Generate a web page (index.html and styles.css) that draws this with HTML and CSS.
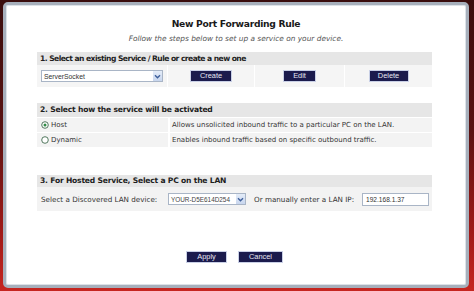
FILE: index.html
```html
<!DOCTYPE html>
<html>
<head>
<meta charset="utf-8">
<link rel="stylesheet" href="styles.css">
</head>
<body>
<div class="frame">
  <div class="panel">
    <h1 class="title">New Port Forwarding Rule</h1>
    <p class="subtitle">Follow the steps below to set up a service on your device.</p>

    <section class="sec sec1">
      <div class="sec-head">1. Select an existing Service / Rule or create a new one</div>
      <div class="row row-actions">
        <div class="cell"><div class="select select-service"><span class="sel-text">ServerSocket</span><span class="arrow"><svg width="9" height="9" viewBox="0 0 9 9"><path d="M2 3.2 L4.5 5.7 L7 3.2" fill="none" stroke="#3e5f9a" stroke-width="1.4"/></svg></span></div></div>
        <div class="cell center"><span class="btn btn-create">Create</span></div>
        <div class="cell center"><span class="btn btn-edit">Edit</span></div>
        <div class="cell center"><span class="btn btn-delete">Delete</span></div>
      </div>
    </section>

    <section class="sec sec2">
      <div class="sec-head">2. Select how the service will be activated</div>
      <div class="row row-opt">
        <div class="cell opt"><svg class="radio" width="8" height="8" viewBox="0 0 8 8"><circle cx="4" cy="4" r="3.3" fill="#fff" stroke="#3f6a4e" stroke-width="0.9"/><circle cx="4" cy="4" r="1.5" fill="#2f8a45"/></svg><span>Host</span></div>
        <div class="cell desc">Allows unsolicited inbound traffic to a particular PC on the LAN.</div>
      </div>
      <div class="row row-opt">
        <div class="cell opt"><svg class="radio" width="8" height="8" viewBox="0 0 8 8"><circle cx="4" cy="4" r="3.3" fill="#fff" stroke="#3f6a4e" stroke-width="0.9"/></svg><span>Dynamic</span></div>
        <div class="cell desc">Enables inbound traffic based on specific outbound traffic.</div>
      </div>
    </section>

    <section class="sec sec3">
      <div class="sec-head">3. For Hosted Service, Select a PC on the LAN</div>
      <div class="row row-lan">
        <span class="lbl lbl-dev">Select a Discovered LAN device:</span>
        <div class="select select-dev"><span class="sel-text">YOUR-D5E614D254</span><span class="arrow"><svg width="9" height="9" viewBox="0 0 9 9"><path d="M2 3.2 L4.5 5.7 L7 3.2" fill="none" stroke="#3e5f9a" stroke-width="1.4"/></svg></span></div>
        <span class="lbl lbl-ip">Or manually enter a LAN IP:</span>
        <div class="input">192.168.1.37</div>
      </div>
    </section>

    <div class="actions">
      <span class="btn btn-apply">Apply</span>
      <span class="btn btn-cancel">Cancel</span>
    </div>
  </div>
</div>
</body>
</html>
```

FILE: styles.css
```css
* { box-sizing: border-box; }
html, body { margin: 0; padding: 0; }
body {
  width: 474px;
  height: 291px;
  overflow: hidden;
  background: linear-gradient(to bottom, #3a0d0d 0%, #5a1212 45%, #a01a18 80%, #c62620 100%);
  font-family: "DejaVu Sans", Verdana, sans-serif;
  color: #222;
}
.frame {
  padding: 2px 5px 3px 3px;
  height: 291px;
}
.panel {
  height: 286px;
  background: #fff;
  border: 3px solid #a7b0bc;
  border-radius: 5px;
  box-shadow: inset 0 0 0 1px #dde2e8;
  display: flex;
  flex-direction: column;
  align-items: center;
}
.title {
  margin: 13px 0 0;
  font-size: 9.2px;
  line-height: 12px;
  font-weight: bold;
  letter-spacing: -0.3px;
  color: #1a1a1a;
}
.subtitle {
  margin: 4px 0 0;
  font-size: 7.4px;
  line-height: 10px;
  font-style: italic;
  letter-spacing: 0;
  color: #555;
}
.sec {
  width: 395px;
  margin-left: -3px;
}
.sec1 { margin-top: 8px; }
.sec2 { margin-top: 16px; }
.sec3 { margin-top: 28px; }
.sec-head {
  background: #e6e6e6;
  font-size: 7.6px;
  font-weight: bold;
  letter-spacing: -0.2px;
  color: #1e1e1e;
  padding-left: 3px;
  height: 13px;
  line-height: 13px;
}
.sec1 .sec-head { letter-spacing: -0.55px; }
.sec2 .sec-head { height: 14px; line-height: 14px; }
.sec3 .sec-head { height: 12px; line-height: 12px; }
.row {
  display: grid;
  background: #fff;
}
.row-actions {
  grid-template-columns: 130px 86px 89px 1fr;
  column-gap: 1px;
  height: 22px;
}
.row-actions .cell {
  background: #f5f5f5;
  display: flex;
  align-items: center;
  padding-left: 4px;
}
.row-actions .center { justify-content: center; padding-left: 0; }
.select {
  display: flex;
  align-items: center;
  justify-content: space-between;
  background: #fff;
  border: 1px solid #a9b5c6;
  height: 12px;
  padding: 0 0 0 2px;
  font-family: "Liberation Sans", Arial, sans-serif;
  font-size: 6.8px;
  color: #333;
}
.select-service { width: 122px; }
.arrow {
  width: 9px;
  height: 10px;
  background: linear-gradient(#e4ecf8, #c8d6ee);
  display: flex;
  align-items: center;
  justify-content: center;
}
.btn {
  display: inline-block;
  background: #1b1b4d;
  color: #e8e8f2;
  font-family: "Liberation Sans", Arial, sans-serif;
  font-size: 7.4px;
  height: 10px;
  line-height: 10px;
  text-align: center;
  box-shadow: 0 0 0 1px #c9d0e6;
}
.btn-create { width: 40px; }
.btn-edit { width: 31px; }
.btn-delete { width: 38px; }
.btn-apply { width: 39px; }
.btn-cancel { width: 43px; }
.row-opt {
  grid-template-columns: 131px 1fr;
  column-gap: 2px;
  height: 14px;
  margin-top: 1px;
}
.row-opt .cell {
  background: #f3f3f3;
  display: flex;
  align-items: center;
  font-size: 7px;
  letter-spacing: 0;
  color: #333;
}
.row-opt .opt { padding-left: 4px; gap: 2px; }
.row-opt .desc { padding-left: 2px; }
.radio { flex: none; }
.row-lan {
  display: flex;
  align-items: center;
  height: 24px;
  background: #f3f3f3;
  font-size: 7.2px;
  letter-spacing: 0;
  color: #333;
}
.lbl-dev { margin-left: 4px; width: 127px; }
.select-dev { width: 78px; font-size: 6.4px; color: #444; }
.lbl-ip { margin-left: 8px; width: 108px; }
.input {
  width: 67px;
  height: 13px;
  line-height: 11px;
  border: 1px solid #a9b5c6;
  background: #fff;
  padding-left: 3px;
  font-family: "Liberation Sans", Arial, sans-serif;
  font-size: 6.6px;
  color: #333;
  letter-spacing: 0;
}
.actions {
  margin-top: 41px;
  margin-left: -3px;
  display: flex;
  gap: 13px;
}
```
